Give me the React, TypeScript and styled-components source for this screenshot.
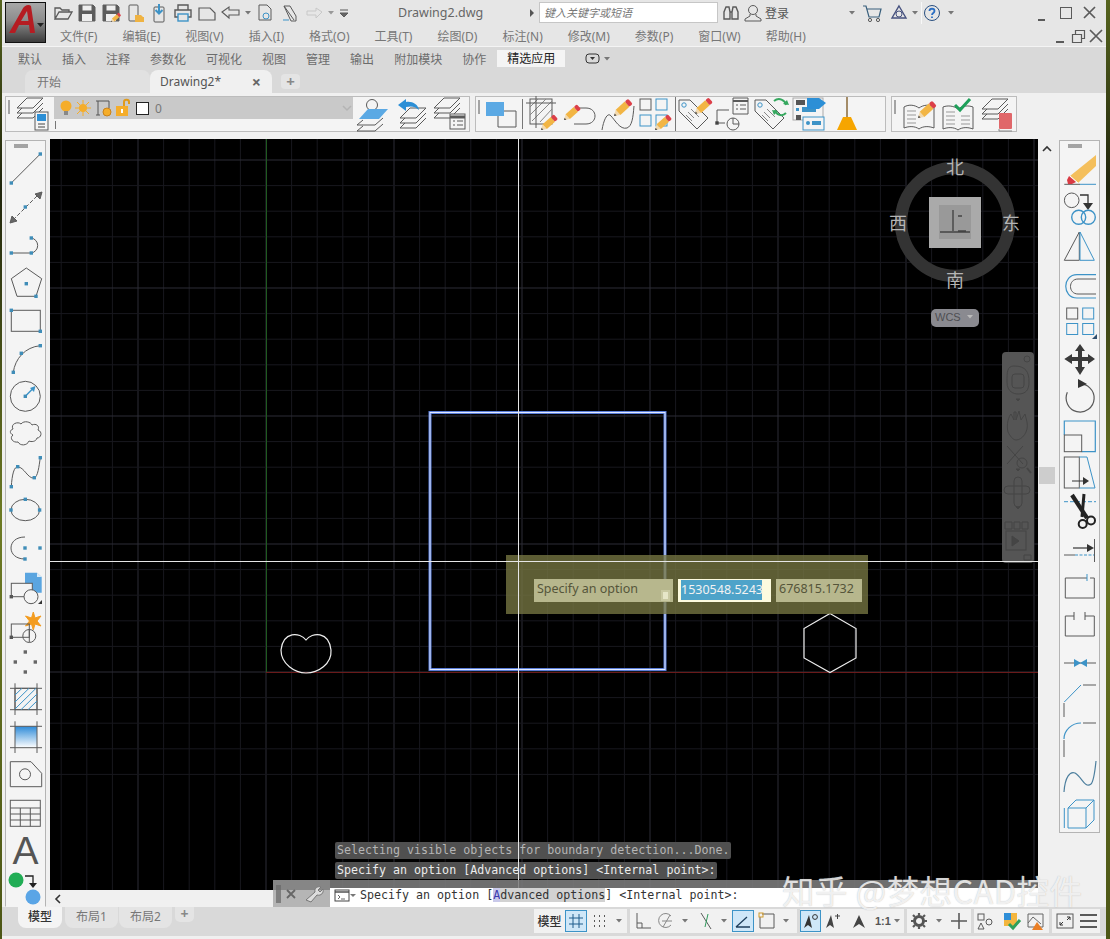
import React from "react";
import styled, { createGlobalStyle } from "styled-components";

const GREY = "#5a5a5a";
const BLUE = "#3d93c7";
const CJK = `"Noto Sans", "Noto Sans CJK SC", sans-serif`;
const MONO = `"DejaVu Sans Mono", "Liberation Mono", monospace`;

const GlobalStyle = createGlobalStyle`
  html, body { margin: 0; padding: 0; overflow: hidden; background: #f0f0f0; }
  * { box-sizing: border-box; }
`;

const Root = styled.div`
  position: relative;
  width: 1110px;
  height: 939px;
  padding: 0 4px 0 2px;
  background: linear-gradient(180deg, #56641e 0%, #20240c 20%, #6d7a24 55%, #4c5616 100%);
  font-family: ${CJK};
  overflow: hidden;
`;
const Win = styled.div`
  display: flex;
  flex-direction: column;
  width: 1104px;
  height: 939px;
  background: #f0f0f0;
`;
const Header = styled.header`
  display: flex;
  height: 46px;
  padding-left: 3px;
  background: #e6e6e6;
`;
const LogoBtn = styled.div`
  flex: none;
  width: 41px;
  height: 41px;
  margin-top: 2px;
  border: 1px solid #111;
  background: linear-gradient(180deg, #a8a8a8 0%, #8c8c8c 45%, #3c3c3c 100%);
`;
const HeaderRows = styled.div`
  flex: 1;
  min-width: 0;
  display: flex;
  flex-direction: column;
`;
const TitleRow = styled.div`
  display: flex;
  align-items: center;
  height: 25px;
  padding-left: 5px;
`;
const QuickBar = styled.div`
  display: flex;
  align-items: center;
  flex: none;
  width: 310px;
`;
const FileName = styled.div`
  flex: none;
  width: 166px;
  padding-left: 37px;
  font-size: 12.5px;
  color: #666;
`;
const SearchBox = styled.div`
  flex: none;
  width: 179px;
  height: 21px;
  margin: 0 3px 0 2px;
  padding: 2px 4px;
  border: 1px solid #c6c6c6;
  background: #fff;
  font-size: 11px;
  font-style: italic;
  line-height: 15px;
  color: #777;
`;
const LoginText = styled.span`
  flex: none;
  width: 84px;
  font-size: 12px;
  color: #555;
`;
const VLine = styled.div<{ $m?: string; $h?: number; $c?: string }>`
  flex: none;
  width: 1px;
  height: ${(p) => p.$h ?? 22}px;
  margin: ${(p) => p.$m ?? "0"};
  background: ${(p) => p.$c ?? "#f8f8f8"};
`;
const Push = styled.div`
  flex: 1;
`;
const WinButtons = styled.div<{ $mr: number }>`
  display: flex;
  align-items: center;
  flex: none;
  margin-right: ${(p) => p.$mr}px;
`;
const MenuRow = styled.nav`
  display: flex;
  align-items: center;
  gap: 25px;
  height: 21px;
  padding-left: 14px;
  font-size: 12px;
  color: #777;
`;
const MenuItem = styled.span`
  white-space: nowrap;
`;
const RibbonRow = styled.nav`
  display: flex;
  align-items: center;
  gap: 20px;
  height: 24px;
  padding-left: 16px;
  border-top: 1px solid #f4f4f4;
  background: #d9d9d9;
  font-size: 12px;
  color: #6c6c6c;
`;
const RibbonTab = styled.span<{ $on?: boolean }>`
  white-space: nowrap;
  ${(p) => p.$on && "margin-left: -9px; padding: 0 10px; line-height: 17px; background: #f4f4f4; color: #222;"}
`;
const RibbonExtra = styled.span`
  display: flex;
  align-items: center;
  gap: 1px;
`;
const FileTabRow = styled.div`
  display: flex;
  align-items: flex-end;
  height: 23px;
  padding-left: 23px;
  background: #d9d9d9;
  font-size: 12px;
`;
const FileTab = styled.div<{ $on?: boolean }>`
  display: flex;
  align-items: center;
  justify-content: space-between;
  width: ${(p) => (p.$on ? 122 : 125)}px;
  height: 23px;
  padding: ${(p) => (p.$on ? "0 11px 0 10px" : "0 12px")};
  border-radius: 8px 8px 0 0;
  background: ${(p) => (p.$on ? "#f0f0f0" : "#e1e1e1")};
  color: ${(p) => (p.$on ? "#555" : "#777")};
`;
const TabClose = styled.span`
  font-size: 16px;
  font-weight: 700;
  color: #666;
`;
const TabPlus = styled.span`
  width: 19px;
  height: 15px;
  margin: 0 0 4px 9px;
  border-radius: 4px;
  background: #e4e4e4;
  font-size: 15px;
  font-weight: 700;
  line-height: 15px;
  text-align: center;
  color: #888;
`;
const ToolRow = styled.div`
  display: flex;
  gap: 5px;
  height: 43px;
  padding: 3px 0 4px 3px;
`;
const ToolGroup = styled.div<{ $w: number }>`
  display: flex;
  align-items: center;
  flex: none;
  width: ${(p) => p.$w}px;
  border: 1px solid #bcbcbc;
  background: #f4f4f4;
`;
const Grip = styled.div<{ $w: number }>`
  flex: none;
  align-self: flex-start;
  width: ${(p) => p.$w}px;
  height: 14px;
  margin-top: 3px;
  background: radial-gradient(circle, #777 0.6px, transparent 0.9px) 2px 0 / 2px 2px repeat-y;
`;
const Slot = styled.div<{ $w: number; $on?: boolean }>`
  display: flex;
  align-items: center;
  justify-content: center;
  flex: none;
  width: ${(p) => p.$w}px;
  height: ${(p) => (p.$on ? "22px" : "auto")};
  ${(p) => p.$on && "background: #cfe7f8; border: 1px solid #3d93c7;"}
`;
const LayerCombo = styled.div`
  display: flex;
  flex-direction: column;
  align-self: stretch;
  flex: none;
  width: 299px;
`;
const ComboTop = styled.div`
  display: flex;
  align-items: center;
  height: 22px;
  padding-left: 3px;
  background: #c9c9c9;
  font-size: 12px;
  color: #777;
`;
const ComboBottom = styled.div`
  flex: 1;
  margin: 2px 0 2px 1px;
  border-left: 1px solid #777;
`;
const ColorSwatch = styled.span`
  flex: none;
  width: 13px;
  height: 13px;
  margin: 0 6px 0 5px;
  border: 1px solid #222;
  background: #fff;
`;
const Body = styled.div`
  position: relative;
  display: flex;
  height: 771px;
`;
const DockSide = styled.aside<{ $w: number; $pl: number }>`
  flex: none;
  width: ${(p) => p.$w}px;
  padding: 4px 0 0 ${(p) => p.$pl}px;
`;
const VToolbar = styled.div<{ $h: number; $top: number }>`
  position: relative;
  width: 41px;
  height: ${(p) => p.$h}px;
  padding-top: ${(p) => p.$top}px;
  border: 1px solid #b4b4b4;
  border-bottom-color: ${(p) => (p.$h > 760 ? "transparent" : "#b4b4b4")};
  background: #f4f4f4;
`;
const VGrip = styled.div`
  position: absolute;
  top: 3px;
  left: 8px;
  width: 14px;
  height: 4px;
  background: radial-gradient(circle, #777 0.6px, transparent 0.9px) 0 0 / 2px 2px;
`;
const VSlot = styled.div`
  display: flex;
  align-items: center;
  justify-content: center;
  width: 39px;
  height: 37.9px;
`;
const BigA = styled.span`
  font-family: "Liberation Sans", sans-serif;
  font-size: 39px;
  line-height: 38px;
  color: #555;
`;
const Center = styled.main`
  position: relative;
  display: flex;
  flex-direction: column;
  flex: none;
  width: 1006px;
  padding-top: 3px;
`;
const CanvasRow = styled.div`
  display: flex;
  height: 751px;
`;
const Canvas = styled.div`
  position: relative;
  width: 988px;
  height: 751px;
  background: #000;
  overflow: hidden;
`;
const DrawLayer = styled.svg`
  position: absolute;
  inset: 0;
`;
const VScroll = styled.div`
  position: relative;
  width: 18px;
`;
const ScrollThumb = styled.div`
  position: absolute;
  top: 328px;
  left: 1px;
  width: 16px;
  height: 17px;
  background: #cdcdcd;
`;
const ScrollArrow = styled.span<{ $l: number; $t: number }>`
  position: absolute;
  left: ${(p) => p.$l}px;
  top: ${(p) => p.$t}px;
  display: flex;
`;
const HScroll = styled.div`
  position: relative;
  height: 17px;
`;
const CompassWord = styled.span<{ $x: number; $y: number }>`
  position: absolute;
  left: ${(p) => p.$x - 60}px;
  top: ${(p) => p.$y - 151}px;
  width: 20px;
  font-size: 18px;
  line-height: 24px;
  text-align: center;
  color: #b5b5b5;
`;
const WcsPill = styled.div`
  position: absolute;
  left: 881px;
  top: 170px;
  display: flex;
  align-items: center;
  justify-content: space-between;
  width: 48px;
  height: 18px;
  padding: 0 6px 2px 4px;
  border-radius: 5px;
  background: #8a8a90;
  font-family: "Liberation Sans", sans-serif;
  font-size: 11px;
  color: #4e4e52;
`;
const NavPanel = styled.div`
  position: absolute;
  left: 952px;
  top: 213px;
  width: 32px;
  height: 211px;
  border-radius: 4px;
  background: #555;
`;
const DynInput = styled.div`
  position: absolute;
  left: 456px;
  top: 416px;
  display: flex;
  width: 362px;
  height: 59px;
  padding: 24px 0 0 28px;
  background: rgba(119, 119, 66, 0.78);
  font-family: "Noto Sans", sans-serif;
  font-size: 12.5px;
`;
const PromptField = styled.div`
  display: flex;
  justify-content: space-between;
  width: 139px;
  height: 23px;
  margin-right: 5px;
  padding: 0 3px;
  background: #b7b78d;
  line-height: 20px;
  color: #55553a;
`;
const PromptLock = styled.span`
  align-self: flex-end;
  width: 9px;
  height: 11px;
  margin-bottom: 1px;
  background: #e6e6c8;
  border: 2px solid #c9c9a2;
`;
const ValueField = styled.div`
  width: 93px;
  height: 23px;
  margin-right: 5px;
  padding: 1px 0 0 3px;
  background: #fdfbdf;
`;
const Selected = styled.span`
  display: block;
  width: 81px;
  height: 20px;
  background: #4ea3c9;
  line-height: 19px;
  color: #f2f2f2;
`;
const ValueOff = styled.div`
  width: 86px;
  height: 23px;
  padding-left: 3px;
  background: #b7b78d;
  line-height: 20px;
  color: #55553a;
`;
const HistoryLine = styled.div<{ $t: number; $c: string }>`
  position: absolute;
  left: 285px;
  top: ${(p) => p.$t}px;
  height: 17px;
  padding: 0 2px;
  border-radius: 2px;
  background: #505050;
  font-family: ${MONO};
  font-size: 11.65px;
  line-height: 16px;
  white-space: pre;
  color: ${(p) => p.$c};
`;
const CommandBar = styled.div`
  position: absolute;
  left: 223px;
  bottom: 0;
  display: flex;
  width: 765px;
  height: 27px;
`;
const CommandGrip = styled.div`
  display: flex;
  align-items: center;
  flex: none;
  width: 57px;
  padding: 0 0 0 3px;
  gap: 5px;
  background: linear-gradient(180deg, #868686 0 10px, #b5b5b5 10px);
`;
const CommandMain = styled.div`
  flex: 1;
  display: flex;
  flex-direction: column;
`;
const CommandShade = styled.div`
  height: 10px;
  background: rgba(125, 125, 125, 0.88);
`;
const CommandInput = styled.div`
  flex: 1;
  display: flex;
  align-items: center;
  padding: 0 0 5px 4px;
  background: #fff;
  font-family: ${MONO};
  font-size: 11.65px;
  white-space: pre;
  color: #333;
`;
const PromptIcon = styled.span`
  display: flex;
  flex: none;
  margin-right: 4px;
`;
const Hint = styled.span<{ $first?: boolean }>`
  background: ${(p) => (p.$first ? "#c9c9ea" : "#d2d2d2")};
  color: ${(p) => (p.$first ? "#3b3bb0" : "#333")};
`;
const StatusRow = styled.footer`
  display: flex;
  gap: 3px;
  height: 29px;
  padding-top: 2px;
  background: #d9d9d9;
`;
const LayoutTabs = styled.div`
  display: flex;
  align-items: flex-start;
  flex: none;
  width: 529px;
  padding-left: 16px;
  margin-top: -2px;
`;
const LayoutTab = styled.span<{ $on?: boolean }>`
  width: ${(p) => (p.$on ? 44 : 53)}px;
  height: 21px;
  margin-right: ${(p) => (p.$on ? 3 : 1)}px;
  border-radius: 0 0 8px 8px;
  background: ${(p) => (p.$on ? "#f4f4f4" : "#e4e4e4")};
  font-size: 12px;
  font-weight: ${(p) => (p.$on ? 500 : 400)};
  line-height: 19px;
  text-align: center;
  color: ${(p) => (p.$on ? "#333" : "#777")};
`;
const LayoutPlus = styled.span`
  width: 19px;
  height: 15px;
  margin-left: 2px;
  border-radius: 0 0 5px 5px;
  background: #e4e4e4;
  font-size: 14px;
  font-weight: 700;
  line-height: 13px;
  text-align: center;
  color: #888;
`;
const StatusGroup = styled.div<{ $w: number }>`
  display: flex;
  align-items: center;
  flex: none;
  width: ${(p) => p.$w}px;
  height: 24px;
  background: #f1f1f1;
`;
const ModelBtn = styled.span`
  flex: none;
  width: 31px;
  font-size: 12px;
  font-weight: 500;
  text-align: center;
  color: #333;
`;
const ScaleText = styled.span`
  flex: none;
  width: 14px;
  font-family: "Liberation Sans", sans-serif;
  font-size: 11px;
  font-weight: 700;
  color: #555;
`;
const Watermark = styled.div`
  position: absolute;
  left: 782px;
  top: 867px;
  font-family: "Noto Sans CJK SC", sans-serif;
  font-size: 32.5px;
  line-height: 46px;
  letter-spacing: 0.4px;
  white-space: pre;
  color: rgba(255, 255, 255, 0.78);
  text-shadow: 0 0 1px rgba(120, 120, 120, 0.5);
`;

const Ico = ({ w = 36, h = w, children }: { w?: number; h?: number; children: React.ReactNode }) => (
  <svg width={w} height={h} viewBox={`0 0 ${w} ${h}`} fill="none" stroke={GREY} strokeWidth={1} style={{ flex: "none", overflow: "visible" }}>
    {children}
  </svg>
);

const Caret = ({ c = "#777" }: { c?: string }) => (
  <svg width={6} height={4} viewBox="0 0 6 4" style={{ flex: "none" }}>
    <path d="M0 0H6L3 3.5Z" fill={c} />
  </svg>
);

const Node = ({ x, y, c = "#3f8db8" }: { x: number; y: number; c?: string }) => (
  <rect x={x - 1.7} y={y - 1.7} width={3.4} height={3.4} fill={c} stroke="none" />
);

const Pencil = ({ x, y, s = 1 }: { x: number; y: number; s?: number }) => (
  <g transform={`translate(${x} ${y}) rotate(-42) scale(${s})`} stroke="none">
    <path d="M0 0L5 -3.2V3.2Z" fill="#f3d9ad" />
    <path d="M0 0L2 -1.3V1.3Z" fill="#444" />
    <rect x={5} y={-3.2} width={11} height={6.4} fill="#f2b544" />
    <rect x={16} y={-3.2} width={4} height={6.4} rx={1.4} fill="#dc3f48" />
  </g>
);

const Sheets = () => (
  <>
    <path d="M1 12L11 2H27L17 12Z" />
    <path d="M6 12L1 17H17L27 7" />
    <path d="M6 17L1 22H17L27 12" />
  </>
);

const Tag = () => (
  <>
    <path d="M2 4H13L31 22L20 33L2 15Z" />
    <circle cx={7} cy={9} r={2.2} stroke={BLUE} />
    <path d="M11 16L17 22M14 13L22 21M9 19L15 25" stroke="#888" />
  </>
);

const Floppy = () => (
  <>
    <path d="M4 3H18L20 5V19H4Z" fill="#5c5c5c" stroke="#5c5c5c" />
    <rect x={7.5} y={3.5} width={9} height={5} fill="#eee" stroke="none" />
    <rect x={7} y={12} width={10} height={7} fill="#eee" stroke="none" />
  </>
);

const quickIcons: React.ReactNode[] = [
  <Ico w={24} h={22} key="open"><path d="M4 17V6H9L11 8H18V10M4 17H17L21 10H8Z" strokeWidth={1.3} /></Ico>,
  <Ico w={24} h={22} key="save"><Floppy /></Ico>,
  <Ico w={24} h={22} key="saveas"><Floppy /><Pencil x={12} y={20} s={0.6} /></Ico>,
  <Ico w={24} h={22} key="cloud"><rect x={6} y={3} width={9} height={16} rx={1} /><path d="M12 13H18L20 15H21V20H12Z" fill="#efb343" stroke="none" /></Ico>,
  <Ico w={24} h={22} key="share"><rect x={7} y={5} width={10} height={15} rx={1} /><path d="M12 2V11M8.5 8L12 11.5L15.5 8" stroke={BLUE} strokeWidth={2} /></Ico>,
  <Ico w={24} h={22} key="print"><path d="M7 8V3H17V8M7 15H4V8H20V15H17" strokeWidth={1.4} /><rect x={7} y={12} width={10} height={7} stroke={BLUE} strokeWidth={1.4} /></Ico>,
  <Ico w={24} h={22} key="plot"><path d="M4 6H15L20 11V18H4Z" strokeWidth={1.2} /></Ico>,
  <Ico w={24} h={22} key="undo"><path d="M3 10L10 5V8H20V13H10V16Z" strokeWidth={1.1} /></Ico>,
];

const TitleBarTail = () => (
  <>
    <Slot $w={20}><Ico w={20} h={18}><path d="M3 15V8L5 3H8L9 8V15ZM11 15V8L12 3H15L17 8V15ZM9 8H11" strokeWidth={1.4} /></Ico></Slot>
    <Slot $w={24}><Ico w={20} h={20}><circle cx={10} cy={7} r={4.5} /><path d="M7 11V13L2 16V18H18V16L13 13V11" /></Ico></Slot>
    <LoginText>登录</LoginText>
    <Caret />
    <Slot $w={34}><Ico w={22} h={20}><path d="M2 3H5L8 14H18L20 6H6" strokeWidth={1.2} stroke="#385f7c" /><circle cx={9} cy={17} r={1.6} /><circle cx={17} cy={17} r={1.6} /></Ico></Slot>
    <Ico w={20} h={20}><path d="M10 3L17 15H3Z" stroke="#47527f" strokeWidth={1.4} /><circle cx={10} cy={11} r={3} stroke="#47527f" /></Ico>
    <Slot $w={12}><Caret /></Slot>
    <VLine $m="0 8 0 4" />
    <Ico w={20} h={20}><circle cx={10} cy={10} r={7.5} stroke="#294f80" /><path d="M7.5 8C7.5 5 12.5 5 12.5 8C12.5 10 10 10 10 12M10 13.5V15" stroke="#2b6fc4" strokeWidth={1.8} /></Ico>
    <Slot $w={17}><Caret /></Slot>
    <Push />
    <WinButtons $mr={4}>
      <Slot $w={24}><Ico w={24} h={20}><path d="M8 17H15" strokeWidth={2} /></Ico></Slot>
      <Slot $w={24}><Ico w={24} h={20}><rect x={6.5} y={4.5} width={11} height={11} /></Ico></Slot>
      <Slot $w={24}><Ico w={24} h={20}><path d="M6 4L17 15M17 4L6 15" strokeWidth={1.7} /></Ico></Slot>
    </WinButtons>
  </>
);

const leftIcons: React.ReactNode[] = [
  <Ico w={38} key="line"><path d="M4.3 33L33.3 4" /><Node x={4.3} y={33} /><Node x={33.3} y={4} /></Ico>,
  <Ico w={38} key="xline"><path d="M6 32L31 7" strokeDasharray="4 2" /><path d="M3 35L5 28L10 33ZM35 4L33 11L28 6Z" fill="#666" /><Node x={18.3} y={19} /></Ico>,
  <Ico w={38} key="pline"><path d="M4.3 27H24.3A7.6 7.6 0 0 0 24.3 12" /><Node x={4.3} y={27} /><Node x={24.3} y={27} /><Node x={24.3} y={12} /></Ico>,
  <Ico w={38} key="polygon"><path d="M19.3 4L34.7 14.7L29 32.3H10L4.3 14.7Z" /><Node x={19.3} y={19.7} /><Node x={29} y={32.3} /></Ico>,
  <Ico w={38} key="rect"><rect x={4.3} y={8.3} width={29} height={21} /><Node x={4.3} y={8.3} /><Node x={33.3} y={29.3} /></Ico>,
  <Ico w={38} key="arc"><path d="M6.3 33.3C8 20 18 8 33.3 6.7" /><Node x={6.3} y={33.3} /><Node x={14.3} y={14.3} /><Node x={33.3} y={6.7} /></Ico>,
  <Ico w={38} key="circle"><circle cx={18.3} cy={19.3} r={15} /><path d="M18.3 19.3L26 11.5" stroke={BLUE} strokeWidth={1.4} /><path d="M28.5 9L27 15L23 11Z" fill={BLUE} stroke="none" /><Node x={18.3} y={19.3} /></Ico>,
  <Ico w={38} key="cloud"><path d="M6 14C3 9 11 6 14 9C17 5 24 7 25 10C29 8 33 11 31 15C36 17 34 23 30 23C29 27 24 27 22 26C20 31 13 31 11 27C6 28 2 23 6 20C2 18 3 15 6 14Z" /></Ico>,
  <Ico w={38} key="spline"><path d="M4.3 33.7C5 22 7 13 11 14C17 14 21 26 27 25C31 24 32 13 33.3 4.7" /><Node x={4.3} y={33.7} /><Node x={10.7} y={13.7} /><Node x={27.3} y={24.7} /><Node x={33.3} y={4.7} /></Ico>,
  <Ico w={38} key="ellipse"><ellipse cx={18.3} cy={19} rx={14.3} ry={10.7} /><Node x={18.3} y={8.3} /><Node x={4} y={19} /><Node x={32.6} y={19} /></Ico>,
  <Ico w={38} key="earc"><path d="M18 8C9 8 4 13 4 19C4 25 9 30 18 30" /><Node x={18} y={19} /><Node x={33} y={19} /><Node x={18} y={30} /></Ico>,
  <Ico w={38} key="insert"><path d="M18 5.7H30L34.7 10V25.7H18Z" fill="#5aa5e0" stroke="none" /><path d="M30 5.7V10H34.7" fill="#d8ebf8" stroke="none" /><rect x={4.3} y={16.3} width={21} height={13.4} fill="#f4f4f4" /><circle cx={24} cy={29.7} r={7} fill="#f4f4f4" /><Node x={4.3} y={29.7} c="#555" /><path d="M35 33L31 37H35Z" fill="#333" stroke="none" /></Ico>,
  <Ico w={38} key="block"><path d="M26.3 7L28 13L34 11L30 16L34 21L28 19L26.3 25L24.5 19L18.5 21L22.5 16L18.5 11L24.5 13Z" fill="#f39c1f" stroke="#f39c1f" /><rect x={4.3} y={19} width={18} height={13.3} /><circle cx={22.3} cy={31} r={6.5} /><path d="M22.3 24V37" /><Node x={4.3} y={32.3} c="#555" /></Ico>,
  <Ico w={38} key="points"><Node x={18.3} y={9} c="#666" /><Node x={8.3} y={19} c="#666" /><Node x={28.3} y={19} c="#666" /><Node x={18.3} y={29} c="#666" /></Ico>,
  <Ico w={38} key="hatch"><path d="M8 8.3H30V29.7H8Z" /><path d="M3 8.3H35M3 29.7H35M8 3.3V35M30 3.3V35" /><path d="M8 15L15 8.3M8 22L22 8.3M8 29L29 8.3M14 29.7L30 14M21 29.7L30 21" stroke={BLUE} /></Ico>,
  <Ico w={38} key="gradient"><defs><linearGradient id="gr" x1="0" y1="0" x2="0" y2="1"><stop offset="0" stopColor="#2e8bd8" /><stop offset="1" stopColor="#ffffff" /></linearGradient></defs><rect x={8} y={8.3} width={22} height={21.4} fill="url(#gr)" stroke="none" /><path d="M3 8.3H35M3 29.7H35M8 3.3V35M30 3.3V35" /></Ico>,
  <Ico w={38} key="region"><path d="M3.3 5.7H24L34.7 17.3V30.7H3.3Z" /><circle cx={18} cy={18.3} r={5.5} /></Ico>,
  <Ico w={38} key="table"><rect x={3.3} y={6.3} width={30} height={26} /><path d="M3.3 14H33.3M3.3 20H33.3M3.3 26H33.3M13.3 14V32.3M23.3 14V32.3" /></Ico>,
];

const rightIcons: React.ReactNode[] = [
  <Ico w={38} key="erase"><path d="M3.3 33.3H19" /><path d="M19 33.3H35" stroke={BLUE} /><path d="M35 4L35 15L17 32L9 25Z" fill="#f4bf5c" stroke="none" /><path d="M9 25L17 32" stroke="#fff" /><path d="M8 25L15 31L11 33H7L6 29Z" fill="#d93a43" stroke="none" /></Ico>,
  <Ico w={38} key="copy"><circle cx={10.7} cy={11.3} r={7.3} /><path d="M19 6H27V15" stroke="#333" strokeWidth={1.3} /><path d="M22 14H32L27 21Z" fill="#333" stroke="none" /><circle cx={17.7} cy={28.3} r={7} stroke={BLUE} strokeWidth={1.4} /><circle cx={27.3} cy={28.3} r={7} stroke={BLUE} strokeWidth={1.4} /></Ico>,
  <Ico w={38} key="mirror"><path d="M3.3 33.3L18.3 5V33.3Z" /><path d="M19 5L33.3 33.3H19Z" stroke={BLUE} /></Ico>,
  <Ico w={38} key="offset"><path d="M35 9.7H16C1 9.7 1 33 16 33H35" stroke={BLUE} strokeWidth={1.2} /><path d="M35 14H17C7 14 7 29 17 29H35" /></Ico>,
  <Ico w={38} key="array"><rect x={5.7} y={5} width={11} height={11} /><rect x={21.7} y={5} width={11} height={11} stroke={BLUE} /><rect x={5.7} y={20.5} width={11} height={11} stroke={BLUE} /><rect x={21.7} y={20.5} width={11} height={11} stroke={BLUE} /><path d="M36 31V36H31Z" fill="#2f4f6e" stroke="none" /></Ico>,
  <Ico w={38} key="move"><path d="M19 4L24 11H21V17H27V14L34 19L27 24V21H21V27H24L19 35L14 27H17V21H11V24L3.3 19L11 14V17H17V11H14Z" fill="#3a3a3a" stroke="none" /></Ico>,
  <Ico w={38} key="rotate"><path d="M19 6A14 14 0 1 1 7 13" strokeWidth={1.2} transform="rotate(-6 19 20)" /><path d="M17 1L26 6L17 10Z" fill="#333" stroke="none" /></Ico>,
  <Ico w={38} key="scale"><path d="M3.3 19V5H34.3V35.7H20.7" stroke={BLUE} strokeWidth={1.2} /><rect x={3.3} y={19} width={17.4} height={16.7} /></Ico>,
  <Ico w={38} key="stretch"><rect x={3.3} y={3} width={15} height={31} /><path d="M18.3 3H26L34 34H18.3" stroke={BLUE} /><path d="M11 27H25" stroke="#333" /><path d="M22 23L28 27L22 31Z" fill="#333" stroke="none" /></Ico>,
  <Ico w={38} key="trim"><path d="M3 9.7H35" stroke={BLUE} strokeDasharray="4 2" /><path d="M11 3L26 26" stroke="#222" strokeWidth={4.2} /><path d="M23 2L21 25" stroke="#222" strokeWidth={3} /><circle cx={21.7} cy={32} r={4} stroke="#222" strokeWidth={2} /><circle cx={30} cy={28.5} r={4} stroke="#222" strokeWidth={2} /></Ico>,
  <Ico w={38} key="extend"><path d="M12 18H30" stroke="#333" strokeWidth={1.2} /><path d="M26 14L33 18L26 22Z" fill="#333" stroke="none" /><path d="M33.5 9V32" /><path d="M3 25H14" /><path d="M14 25H33" stroke={BLUE} strokeDasharray="3 1.5" /></Ico>,
  <Ico w={38} key="break"><path d="M26 10H4.3V30H33.3V10H29" /><path d="M26 6V13" stroke={BLUE} /></Ico>,
  <Ico w={38} key="break2"><path d="M13 10H4.3V30H33.3V10H24" /><path d="M13 6V14M24 6V14" stroke="#555" /></Ico>,
  <Ico w={38} key="join"><path d="M3 19H35" /><path d="M13 15L20 19L13 23ZM26 15L19 19L26 23Z" fill={BLUE} stroke="none" /></Ico>,
  <Ico w={38} key="chamfer"><path d="M3 36V22" /><path d="M3.3 21L20 4" stroke={BLUE} /><path d="M22 4H35" /></Ico>,
  <Ico w={38} key="fillet"><path d="M3 38V21" /><path d="M3 20C3 11 11 4 20 4" stroke={BLUE} strokeWidth={1.2} /><path d="M22 4H35" /></Ico>,
  <Ico w={38} key="blend"><path d="M3 35C4 20 9 14 14 16C21 20 24 32 30 27C33 24 34 14 35 4" strokeWidth={1.2} stroke="#4d7f9e" /></Ico>,
  <Ico w={38} key="cube"><path d="M3.3 13V33M7 13H25V33H7ZM7 13L15 5H33L25 13M33 5V25L25 33" stroke={BLUE} /></Ico>,
];

const GridLines = () => {
  const xs = Array.from({ length: 40 }, (_, i) => ({ v: 266 + (i - 8) * 25.6, major: (i - 8) % 5 === 0 }));
  const ys = Array.from({ length: 30 }, (_, i) => ({ v: 672 - (i - 4) * 25.6, major: (i - 4) % 5 === 0 }));
  return (
    <>
      {xs.map((l) => (
        <path key={`x${l.v}`} d={`M${l.v} 139V890`} stroke={l.major ? "#2d2d36" : "#18181e"} />
      ))}
      {ys.map((l) => (
        <path key={`y${l.v}`} d={`M50 ${l.v}H1038`} stroke={l.major ? "#2d2d36" : "#18181e"} />
      ))}
    </>
  );
};

const Drawing = () => (
  <DrawLayer width={988} height={751} viewBox="50 139 988 751" fill="none">
    <GridLines />
    <path d="M266.5 139V672" stroke="#1f5a1f" />
    <path d="M266 672.5H1038" stroke="#6a1a1a" />
    <rect x={430} y={412.5} width={235} height={257} stroke="#5a7dd8" strokeWidth={3} />
    <rect x={430} y={412.5} width={235} height={257} stroke="#dfe9ff" strokeWidth={1} />
    <path d="M306 640C300 632 283 631 281 650C281 664 295 673 306 673C318 673 332 664 331 650C329 631 312 632 306 640Z" stroke="#eee" strokeWidth={1.2} />
    <path d="M830 613.5L856 628.5V658L830 672.5L804 658V628.5Z" stroke="#eee" strokeWidth={1.2} />
    <circle cx={955} cy={222} r={54} stroke="#333" strokeWidth={12.5} />
    <rect x={929} y={197} width={52} height={51} fill="#aaa" />
    <rect x={939} y={205} width={32} height={34} fill="#999" />
    <path d="M953 210V231M940 232H970M958 216H962M958 231H966" stroke="#444" strokeWidth={1.4} />
  </DrawLayer>
);

const Crosshair = () => (
  <DrawLayer width={988} height={751} viewBox="50 139 988 751" fill="none">
    <path d="M518.5 139V890M50 561.5H1038" stroke="#e6e6e6" />
  </DrawLayer>
);

const NavIcons = () => (
  <svg width={32} height={211} viewBox="0 0 32 211" fill="none" stroke="#454545">
    <circle cx={25} cy={7} r={3} />
    <path d="M12 14C5 14 5 20 5 30C5 40 12 42 16 42C24 42 27 38 27 30C27 20 24 14 12 14Z" />
    <rect x={10} y={22} width={12} height={14} rx={3} />
    <path d="M14 47H18L16 49Z" fill="#454545" />
    <path d="M6 80C4 72 7 64 9 62L12 68V60H14V68L17 59L19 68L23 62L25 70C27 80 20 88 14 88C11 88 8 84 6 80Z" />
    <path d="M5 94L21 112M21 94L5 112" />
    <circle cx={20} cy={111} r={5} />
    <path d="M25 116L29 121" strokeWidth={2} />
    <path d="M14 117H18L16 119Z" fill="#454545" />
    <rect x={12} y={125} width={8} height={30} rx={4} />
    <rect x={2} y={134} width={26} height={8} rx={4} />
    <path d="M14 155H18L16 157Z" fill="#454545" />
    <path d="M3 170H10V177H3ZM12 170H18V177H12ZM20 170H26V177H20Z" />
    <rect x={4} y={179} width={20} height={19} />
    <path d="M10 184L17 189L10 194Z" fill="#454545" />
    <path d="M22 203H29V208H22Z" />
  </svg>
);

const menus = ["文件(F)", "编辑(E)", "视图(V)", "插入(I)", "格式(O)", "工具(T)", "绘图(D)", "标注(N)", "修改(M)", "参数(P)", "窗口(W)", "帮助(H)"];
const tabs = ["默认", "插入", "注释", "参数化", "可视化", "视图", "管理", "输出", "附加模块", "协作"];

const App = (): JSX.Element => (
  <Root>
    <GlobalStyle />
    <Win>
      <Header>
        <LogoBtn>
          <svg width={39} height={39} viewBox="0 0 39 39">
            <path d="M3 30L16 7C18 2 23 1 25 3L29 30H24L23 22H13L9 30ZM15 18H22.5L21 8Z" fill="#b51c22" fillRule="evenodd" />
            <path d="M31 20H38L34.5 24Z" fill="#222" />
          </svg>
        </LogoBtn>
        <HeaderRows>
          <TitleRow>
            <QuickBar>
              {quickIcons}
              <Slot $w={10}><Caret /></Slot>
              <Ico w={24} h={22}><path d="M6 3H14L18 7V18H6Z" /><circle cx={13} cy={14} r={3} stroke={BLUE} /></Ico>
              <Ico w={24} h={22}><path d="M7 4L17 18M7 4H13L19 14V19H14Z" /><path d="M6 18H12" stroke={BLUE} /></Ico>
              <Ico w={24} h={22}><path d="M21 10L15 6V9H6V13H15V16Z" stroke="#c8c8c8" /></Ico>
              <Slot $w={12}><Caret c="#999" /></Slot>
              <Ico w={14} h={22}><path d="M3 8H11M3 11H11L7 15Z" fill="#666" strokeWidth={1} /></Ico>
            </QuickBar>
            <FileName>Drawing2.dwg</FileName>
            <svg width={10} height={10} viewBox="0 0 10 10"><path d="M3 1L7 5L3 9Z" fill="#555" /></svg>
            <SearchBox>键入关键字或短语</SearchBox>
            <TitleBarTail />
          </TitleRow>
          <MenuRow>
            {menus.map((m) => (
              <MenuItem key={m}>{m}</MenuItem>
            ))}
            <Push />
            <WinButtons $mr={1}>
              <Slot $w={18}><Ico w={18} h={20}><path d="M5 16H13" strokeWidth={2} /></Ico></Slot>
              <Slot $w={18}><Ico w={18} h={20}><path d="M3.5 8.5H12.5V16.5H3.5ZM6.5 8V4.5H15.5V12.5H13" strokeWidth={1.2} /></Ico></Slot>
              <Slot $w={18}><Ico w={18} h={20}><path d="M3 4L15 16M15 4L3 16" strokeWidth={1.7} /></Ico></Slot>
            </WinButtons>
          </MenuRow>
        </HeaderRows>
      </Header>
      <RibbonRow>
        {tabs.map((t) => (
          <RibbonTab key={t}>{t}</RibbonTab>
        ))}
        <RibbonTab $on>精选应用</RibbonTab>
        <RibbonExtra>
          <Ico w={18} h={12}><rect x={1} y={1} width={13} height={9} rx={3} stroke="#333" /><path d="M5 4H10L7.5 7Z" fill="#333" stroke="none" /></Ico>
          <Caret />
        </RibbonExtra>
      </RibbonRow>
      <FileTabRow>
        <FileTab>开始</FileTab>
        <FileTab $on>
          Drawing2*
          <TabClose>×</TabClose>
        </FileTab>
        <TabPlus>+</TabPlus>
      </FileTabRow>
      <ToolRow>
        <ToolGroup $w={465}>
          <Grip $w={8} />
          <Slot $w={40}>
            <Ico><Sheets /><rect x={19} y={16} width={13} height={18} fill="#f4f4f4" /><rect x={21} y={18} width={9} height={7} fill="#2c8fd6" stroke="none" /><path d="M22 28H29M22 31H29" stroke="#444" /></Ico>
          </Slot>
          <LayerCombo>
            <ComboTop>
              <Ico w={18} h={18}><circle cx={9} cy={7} r={5.5} fill="#f5ad2a" stroke="none" /><rect x={7} y={12} width={4} height={4} fill="#888" stroke="none" /></Ico>
              <Ico w={18} h={18}><circle cx={8} cy={9} r={4} fill="#f5ad2a" stroke="none" /><path d="M8 1V17M0 9H16M2 3L14 15M14 3L2 15" stroke="#f5ad2a" /></Ico>
              <Ico w={20} h={20}><path d="M5 14V3H16V10M5 3H3M3 17H7M5 17V14" stroke="#555" /><circle cx={14} cy={14} r={4} fill="#f5ad2a" stroke="#c9821a" /></Ico>
              <Ico w={18} h={18}><rect x={3} y={7} width={12} height={10} fill="#f5ad2a" stroke="none" /><path d="M11 7V3C11 0 16 0 16 3V5" stroke="#e09a1a" strokeWidth={2} /><rect x={8} y={10} width={2} height={4} fill="#fff" stroke="none" /></Ico>
              <ColorSwatch />
              0
              <Push />
              <svg width={10} height={8} viewBox="0 0 10 8" fill="none" stroke="#b4b4b4" strokeWidth={1.5}><path d="M1 2L5 6L9 2" /></svg>
              <VLine $c="transparent" $h={1} $m="0 2 0 0" />
            </ComboTop>
            <ComboBottom />
          </LayerCombo>
          <Slot $w={39}>
            <Ico><circle cx={17} cy={9} r={5.5} /><path d="M4 23L13 13H33L24 23Z" fill="#5ba9e4" stroke="none" /><path d="M8 24L2 29H20L28 22M8 30L2 35H20L28 28" /></Ico>
          </Slot>
          <Slot $w={40}>
            <Ico><g transform="translate(5 10)"><Sheets /></g><path d="M4 9L12 3V6C18 5 24 8 25 14C21 10 17 10 12 11V15Z" fill="#2c8fd6" stroke="none" /></Ico>
          </Slot>
          <Slot $w={37}>
            <Ico><Sheets /><rect x={17} y={18} width={15} height={15} fill="#f4f4f4" /><path d="M17 21H32" strokeWidth={3} /><path d="M20 25H22M24 25H30M20 29H22M24 29H30" /></Ico>
          </Slot>
        </ToolGroup>
        <ToolGroup $w={411}>
          <Grip $w={8} />
          <Slot $w={38}>
            <Ico><rect x={1} y={6} width={18} height={14} fill="#5ba9e4" stroke="none" /><path d="M19 15H31V31H13V20" /></Ico>
          </Slot>
          <VLine $m="0 5 0 3" $h={30} $c="#777" />
          <Slot $w={38}>
            <Ico><rect x={6} y={3} width={22} height={25} /><path d="M6 11L14 3M6 19L22 3M8 25L28 5M16 26L28 13" stroke="#888" /><path d="M2 7H32M12 0V32" /><Pencil x={17} y={34} /></Ico>
          </Slot>
          <Slot $w={38}>
            <Ico><path d="M17 12H24C36 12 36 28 24 28H12" /><Pencil x={2} y={24} /></Ico>
          </Slot>
          <Slot $w={38}>
            <Ico><path d="M2 34C4 22 8 16 11 20C15 24 20 34 27 32C32 30 33 22 34 10" /><Pencil x={14} y={20} s={1.1} /></Ico>
          </Slot>
          <Slot $w={38}>
            <Ico><rect x={2} y={3} width={11} height={11} /><rect x={18} y={3} width={11} height={11} stroke={BLUE} /><rect x={2} y={19} width={11} height={11} stroke={BLUE} /><rect x={18} y={19} width={11} height={11} stroke={BLUE} /><Pencil x={17} y={34} /></Ico>
          </Slot>
          <VLine $m="0 4 0 5" $h={34} $c="#777" />
          <Slot $w={38}>
            <Ico><Tag /><Pencil x={18} y={18} s={1.05} /></Ico>
          </Slot>
          <Slot $w={38}>
            <Ico><path d="M18 2H33V18H18Z" /><path d="M18 5H33" strokeWidth={2} /><path d="M21 9H23M25 9H31M21 13H23M25 13H31" /><path d="M14 14H2V27H10" /><circle cx={18} cy={28} r={6} /><path d="M18 22V28H24" /><Node x={2} y={27} c="#444" /></Ico>
          </Slot>
          <Slot $w={38}>
            <Ico><Tag /><path d="M21 5C26 1 32 4 33 9M33 17C29 21 23 19 22 14" stroke="#36a85f" strokeWidth={2} /><path d="M30 8L36 9L34 4ZM25 15L19 14L21 19Z" fill="#36a85f" stroke="none" /></Ico>
          </Slot>
          <Slot $w={38}>
            <Ico><rect x={2} y={2} width={30} height={22} fill="#f4f4f4" stroke="#aaa" /><rect x={5} y={4} width={9} height={5} fill="#555" stroke="none" /><rect x={5} y={12} width={3} height={3} fill={BLUE} stroke="none" /><rect x={11} y={11} width={14} height={5} fill={BLUE} stroke="none" /><rect x={5} y={19} width={5} height={5} fill="#555" stroke="none" /><path d="M16 2H28L35 7L28 13H16Z" fill="#2c8fd6" stroke="none" /><rect x={12} y={21} width={21} height={13} fill="#f4f4f4" stroke={BLUE} /><circle cx={17} cy={27} r={2} fill={BLUE} stroke="none" /><rect x={21} y={25} width={9} height={4} fill={BLUE} stroke="none" /></Ico>
          </Slot>
          <Slot $w={38}>
            <Ico><path d="M18 1V22" stroke="#8a6a3a" strokeWidth={1.5} /><path d="M14 21H22L28 34H8Z" fill="#f6a500" stroke="none" /></Ico>
          </Slot>
        </ToolGroup>
        <ToolGroup $w={126}>
          <Grip $w={7} />
          <Slot $w={39}>
            <Ico><path d="M3 11C8 8 14 9 18 12C22 9 28 8 33 11V32C28 30 22 30 18 33C14 30 8 30 3 32Z" /><path d="M6 15H15M6 19H15M6 23H15M6 27H15" stroke="#999" /><Pencil x={17} y={22} s={1.1} /></Ico>
          </Slot>
          <Slot $w={39}>
            <Ico><path d="M3 11C8 9 14 10 18 13C22 10 28 9 33 11V33C28 31 22 31 18 34C14 31 8 31 3 33Z" /><path d="M6 16H15M6 20H15M6 24H15M6 28H15M21 20H30M21 24H30M21 28H30" stroke="#999" /><path d="M15 9L20 14L30 3" stroke="#1ea05a" strokeWidth={3} /></Ico>
          </Slot>
          <Slot $w={39}>
            <Ico><g transform="translate(2 1)"><Sheets /></g><rect x={20} y={17} width={13} height={16} rx={1} fill="#e0676a" stroke="none" /><path d="M20 33V35H33" stroke="#888" /></Ico>
          </Slot>
        </ToolGroup>
      </ToolRow>
      <Body>
        <DockSide $w={48} $pl={3}>
          <VToolbar $h={767} $top={9}>
            <VGrip />
            {leftIcons.map((icon, i) => (
              <VSlot key={i}>{icon}</VSlot>
            ))}
            <VSlot><BigA>A</BigA></VSlot>
            <Ico w={39} h={30}>
              <circle cx={10} cy={10} r={7.5} fill="#21ad55" stroke="none" />
              <path d="M19 6H27V14" stroke="#222" strokeWidth={1.3} />
              <path d="M23 13H31L27 18Z" fill="#222" stroke="none" />
              <circle cx={27} cy={27} r={7.5} fill="#5aa5e6" stroke="none" />
            </Ico>
          </VToolbar>
        </DockSide>
        <Center>
          <CanvasRow>
            <Canvas>
              <Drawing />
              <CompassWord $x={955} $y={167}>北</CompassWord>
              <CompassWord $x={955} $y={280}>南</CompassWord>
              <CompassWord $x={898} $y={223}>西</CompassWord>
              <CompassWord $x={1011} $y={223}>东</CompassWord>
              <WcsPill>WCS<Caret c="#bbb" /></WcsPill>
              <NavPanel><NavIcons /></NavPanel>
              <DynInput>
                <PromptField>Specify an option<PromptLock /></PromptField>
                <ValueField><Selected>1530548.5243</Selected></ValueField>
                <ValueOff>676815.1732</ValueOff>
              </DynInput>
              <HistoryLine $t={703} $c="#b5b5b5">Selecting visible objects for boundary detection...Done.</HistoryLine>
              <HistoryLine $t={723} $c="#ececec">{"Specify an option [Advanced options] <Internal point>:"}</HistoryLine>
              <Crosshair />
            </Canvas>
            <VScroll>
              <ScrollArrow $l={4} $t={6}>
                <svg width={10} height={7} viewBox="0 0 10 7" fill="none" stroke="#333" strokeWidth={1.6}><path d="M1 6L5 2L9 6" /></svg>
              </ScrollArrow>
              <ScrollThumb />
            </VScroll>
          </CanvasRow>
          <HScroll>
            <ScrollArrow $l={4} $t={4}>
              <svg width={7} height={10} viewBox="0 0 7 10" fill="none" stroke="#333" strokeWidth={1.6}><path d="M6 1L2 5L6 9" /></svg>
            </ScrollArrow>
            <ScrollArrow $l={979} $t={4}>
              <svg width={7} height={10} viewBox="0 0 7 10" fill="none" stroke="#333" strokeWidth={1.6}><path d="M1 1L5 5L1 9" /></svg>
            </ScrollArrow>
          </HScroll>
          <CommandBar>
            <CommandGrip>
              <svg width={5} height={18} viewBox="0 0 5 18"><path d="M0 0H5V18H0Z" fill="#666" opacity={0.7} /></svg>
              <svg width={10} height={10} viewBox="0 0 10 10" stroke="#666" strokeWidth={1.8}><path d="M1 1L9 9M9 1L1 9" /></svg>
              <Ico w={24} h={18}><path d="M10 17L5 15L14 7C13 3 17 1 20 2L17 5L19 7L22 4C23 8 20 11 16 10Z" stroke="#777" fill="#ddd" /></Ico>
            </CommandGrip>
            <CommandMain>
              <CommandShade />
              <CommandInput>
                <PromptIcon>
                  <svg width={22} height={13} viewBox="0 0 22 13" fill="none" stroke="#444">
                    <rect x={1} y={1} width={14} height={11} />
                    <path d="M1 3H15" strokeWidth={1.4} />
                    <path d="M4 6L6 8L4 10M7 10H11" stroke="#666" />
                    <path d="M16 5H22L19 8Z" fill="#777" stroke="none" />
                  </svg>
                </PromptIcon>
                {"Specify an option ["}
                <Hint $first>A</Hint>
                <Hint>dvanced options</Hint>
                {"] <Internal point>:"}
              </CommandInput>
            </CommandMain>
          </CommandBar>
        </Center>
        <DockSide $w={50} $pl={3}>
          <VToolbar $h={693} $top={10}>
            <VGrip />
            {rightIcons.map((icon, i) => (
              <VSlot key={i}>{icon}</VSlot>
            ))}
          </VToolbar>
        </DockSide>
      </Body>
      <StatusRow>
        <LayoutTabs>
          <LayoutTab $on>模型</LayoutTab>
          <LayoutTab>布局1</LayoutTab>
          <LayoutTab>布局2</LayoutTab>
          <LayoutPlus>+</LayoutPlus>
        </LayoutTabs>
        <StatusGroup $w={93}>
          <ModelBtn>模型</ModelBtn>
          <Slot $w={22} $on><Ico w={16} h={16}><path d="M1 5H15M1 11H15M5 1V15M11 1V15" stroke="#1f5d8c" /></Ico></Slot>
          <Slot $w={26}><Ico w={16} h={16}><path d="M2 3H3M7 3H8M12 3H13M2 8H3M7 8H8M12 8H13M2 13H3M7 13H8M12 13H13" strokeWidth={2} /></Ico></Slot>
          <Slot $w={12}><Caret /></Slot>
        </StatusGroup>
        <StatusGroup $w={167}>
          <Slot $w={26}><Ico w={18} h={18}><path d="M3 1V16H17M3 11H8V16" /></Ico></Slot>
          <Slot $w={18}><Ico w={18} h={18}><path d="M15 4A7 7 0 1 0 15 13M7 15L14 3M6 9H16" stroke="#888" /></Ico></Slot>
          <Slot $w={22}><Caret /></Slot>
          <Slot $w={20}><Ico w={18} h={18}><path d="M4 1L14 17" /><path d="M11 2L8 15" stroke="#2f9a5c" /></Ico></Slot>
          <Slot $w={16}><Caret /></Slot>
          <Slot $w={22} $on><Ico w={18} h={18}><path d="M2 15H16M2 15L13 5" stroke="#1f3f5c" strokeWidth={1.3} /></Ico></Slot>
          <Slot $w={26}><Ico w={20} h={20}><path d="M5 3H17V17H3V6" /><rect x={2} y={2} width={4} height={4} stroke="#d09a2a" /></Ico></Slot>
          <Slot $w={12}><Caret /></Slot>
        </StatusGroup>
        <StatusGroup $w={104}>
          <Slot $w={21} $on><Ico w={18} h={18}><path d="M2 16L7 3L10 16L6 13Z" fill="#333" stroke="none" /><circle cx={13} cy={5} r={2.4} stroke="#333" /></Ico></Slot>
          <Slot $w={22}><Ico w={18} h={18}><path d="M3 16L8 3L11 16L7 13Z" fill="#444" stroke="none" /><path d="M12 4H17M14.5 2V7" stroke="#444" /></Ico></Slot>
          <Slot $w={32}><Ico w={18} h={18}><path d="M3 16L9 3L15 16L9 12Z" fill="#444" stroke="none" /></Ico></Slot>
          <ScaleText>1:1</ScaleText>
          <Slot $w={15}><Caret /></Slot>
        </StatusGroup>
        <StatusGroup $w={64}>
          <Slot $w={24}><Ico w={16} h={16}><circle cx={8} cy={8} r={4.5} stroke="#555" strokeWidth={3} /><path d="M8 0V3M8 13V16M0 8H3M13 8H16M2 2L4 4M12 12L14 14M14 2L12 4M4 12L2 14" strokeWidth={2.2} /></Ico></Slot>
          <Slot $w={16}><Caret /></Slot>
          <Slot $w={24}><Ico w={18} h={18}><path d="M9 1V17M1 9H17" strokeWidth={1.6} /></Ico></Slot>
        </StatusGroup>
        <StatusGroup $w={75}>
          <Slot $w={22}><Ico w={18} h={18}><rect x={2} y={2} width={6} height={6} /><circle cx={13} cy={10} r={3} /><path d="M2 17L5 11L8 17Z" /></Ico></Slot>
          <Slot $w={30}><Ico w={20} h={20}><rect x={3} y={2} width={13} height={13} fill="#f3b63f" stroke="none" /><rect x={3} y={2} width={7} height={7} fill="#2f8fd8" stroke="none" /><path d="M8 13L12 17L19 9" stroke="#2fa05a" strokeWidth={3} /></Ico></Slot>
          <Slot $w={20}><Ico w={20} h={20}><path d="M2 3H17V16H2ZM2 12L7 6L15 13" stroke="#666" /><path d="M11 11L17 19H6Z" fill="#ea7f26" stroke="none" /></Ico></Slot>
        </StatusGroup>
        <StatusGroup $w={48}>
          <Slot $w={26}><Ico w={18} h={16}><rect x={1} y={1} width={16} height={14} /><path d="M4 12L7 9M11 7L14 4M4 9V12H7M11 4H14V7" stroke="#333" /></Ico></Slot>
          <Slot $w={22}><Ico w={18} h={16}><path d="M0 2H17M0 8H17M0 14H17" strokeWidth={1.8} /></Ico></Slot>
        </StatusGroup>
      </StatusRow>
    </Win>
    <Watermark>{"知乎 @梦想CAD控件"}</Watermark>
  </Root>
);

export default App;
